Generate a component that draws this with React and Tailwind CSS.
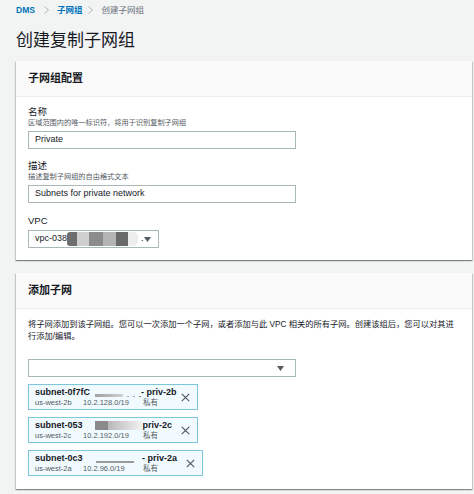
import React from 'react'

const font = { fontFamily: '"Liberation Sans", "Noto Sans CJK SC", sans-serif' }

function Caret() {
  return (
    <svg width="7" height="5" viewBox="0 0 7 5" className="shrink-0">
      <path d="M0 0 L7 0 L3.5 5 Z" fill="#545b64" />
    </svg>
  )
}

function Close() {
  return (
    <svg width="9" height="9" viewBox="0 0 9 9" className="shrink-0">
      <path d="M0.8 0.8 L8.2 8.2 M8.2 0.8 L0.8 8.2" stroke="#545b64" strokeWidth="1.2" />
    </svg>
  )
}

function Card({ title, children, className }) {
  return (
    <div className={`w-[456px] bg-white shadow-[0_1px_1px_0_rgba(0,28,36,0.3),1px_1px_1px_0_rgba(0,28,36,0.15),-1px_1px_1px_0_rgba(0,28,36,0.15)] ${className}`}>
      <div className="h-[36px] flex items-center px-3 bg-[#fafafa] border-b border-[#eaeded]">
        <span className="text-[11px] font-bold text-[#16191f]">{title}</span>
      </div>
      <div className="px-3">{children}</div>
    </div>
  )
}

function Field({ label, desc, value }) {
  return (
    <div>
      <div className="text-[9.5px] leading-[12px] text-[#16191f]">{label}</div>
      <div className="text-[7.2px] leading-[10px] text-[#545b64] whitespace-nowrap">{desc}</div>
      <div className="mt-[3px] h-[18px] w-[268px] border border-[#aab7b8] flex items-center px-[6px] text-[9px] text-[#16191f] whitespace-nowrap">
        {value}
      </div>
    </div>
  )
}

const tokens = [
  { id: 'subnet-0f7fC', az: 'us-west-2b', cidr: '10.2.128.0/19', name: '- priv-2b', w: 'w-[170px]', blur: 'line' },
  { id: 'subnet-053', az: 'us-west-2c', cidr: '10.2.192.0/19', name: 'priv-2c', w: 'w-[170px]', blur: 'block' },
  { id: 'subnet-0c3', az: 'us-west-2a', cidr: '10.2.96.0/19', name: '- priv-2a', w: 'w-[175px]', blur: 'line2' },
]

function Redact({ kind }) {
  if (kind === 'block') {
    return (
      <span className="flex h-[9px] w-[53px] ml-[12px]">
        <span className="w-[13px] bg-[#8a8a8a] blur-[0.5px]" />
        <span className="flex-1 bg-gradient-to-r from-[#b8b8b8] to-[#f2f2f2] blur-[0.5px]" />
      </span>
    )
  }
  if (kind === 'line2') {
    return (
      <span className="flex items-end h-[10px] w-[40px] ml-[13px]">
        <span className="h-[2px] w-[38px] bg-[#9a9a9a] blur-[0.4px]" />
      </span>
    )
  }
  return (
    <span className="flex items-end gap-[4px] h-[10px] ml-[5px]">
      <span className="h-[3px] w-[28px] bg-gradient-to-r from-[#a0a0a0] to-[#d0d0d0] blur-[0.4px]" />
      <span className="h-[1px] w-[2px] bg-[#aaa]" />
      <span className="h-[1px] w-[2px] bg-[#aaa]" />
      <span className="h-[1px] w-[2px] bg-[#888]" />
    </span>
  )
}

export default function App() {
  return (
    <div style={font} className="w-[474px] h-[494px] bg-[#f2f3f3] overflow-hidden pl-4">
      {/* breadcrumb */}
      <div className="h-[20px] flex items-center text-[8.5px]">
        <span className="text-[#0073bb] font-bold">DMS</span>
        <svg width="5" height="8" viewBox="0 0 5 8" className="ml-[9px] mr-[8px]"><path d="M0.5 0.5 L4.5 4 L0.5 7.5" stroke="#aab7b8" fill="none" strokeWidth="1" /></svg>
        <span className="text-[#0073bb] font-bold">子网组</span>
        <svg width="5" height="8" viewBox="0 0 5 8" className="ml-[6px] mr-[8px]"><path d="M0.5 0.5 L4.5 4 L0.5 7.5" stroke="#aab7b8" fill="none" strokeWidth="1" /></svg>
        <span className="text-[#687078]">创建子网组</span>
      </div>
      {/* title */}
      <div className="h-[41px] flex items-center text-[17px] text-[#16191f]">创建复制子网组</div>

      <Card title="子网组配置">
        <div className="pt-[9px] pb-[12px] flex flex-col">
          <Field label="名称" desc="区域范围内的唯一标识符，将用于识别复制子网组" value="Private" />
          <div className="mt-[11px]">
            <Field label="描述" desc="描述复制子网组的自由格式文本" value="Subnets for private network" />
          </div>
          <div className="mt-[12px]">
            <div className="text-[9.5px] leading-[12px] text-[#16191f]">VPC</div>
            <div className="mt-[3px] h-[18px] w-[131px] border border-[#aab7b8] flex items-center pl-[6px] pr-[8px] text-[9px] text-[#16191f] whitespace-nowrap">
              <span className="shrink-0">vpc-038</span>
              <span className="flex h-[14px] shrink-0">
                <span className="w-[10px] bg-[#6e6e6e] rounded-l-[3px] blur-[0.3px]" />
                <span className="w-[12px] bg-[#cfcfcf]" />
                <span className="w-[14px] bg-[#8c8c8c]" />
                <span className="w-[13px] bg-[#b4b4b4]" />
                <span className="w-[12px] bg-[#6a6a6a]" />
                <span className="w-[10px] bg-[#ededed] rounded-r-[5px]" />
              </span>
              <span className="ml-[3px]">.</span>
              <span className="ml-auto"><Caret /></span>
            </div>
          </div>
        </div>
      </Card>

      <Card title="添加子网" className="mt-[13px]">
        <div className="pt-[10px] pb-[13px]">
          <div className="text-[8.25px] leading-[12px] text-[#16191f] -mr-[2px]">
            将子网添加到该子网组。您可以一次添加一个子网，或者添加与此 VPC 相关的所有子网。创建该组后，您可以对其进行添加/编辑。
          </div>
          <div className="mt-[16px] h-[18px] w-[268px] border border-[#aab7b8] flex items-center justify-end pr-[11px]">
            <Caret />
          </div>
          <div className="mt-[7px] flex flex-col gap-[7px]">
            {tokens.map((t) => (
              <div key={t.id} className={`${t.w} h-[26px] border border-[#7dc6dc] bg-[#f1faff] flex items-center pl-[6px] pr-[7px] whitespace-nowrap`}>
                <div className="flex-1 min-w-0">
                  <div className="flex items-center text-[9px] leading-[11px] font-bold text-[#16191f]">
                    <span>{t.id}</span>
                    <Redact kind={t.blur} />
                    <span className="ml-auto">{t.name}</span>
                  </div>
                  <div className="flex text-[7.5px] leading-[10px] text-[#545b64]">
                    <span className="w-[48px]">{t.az}</span>
                    <span className="w-[60px]">{t.cidr}</span>
                    <span>私有</span>
                  </div>
                </div>
                <span className="ml-[9px]"><Close /></span>
              </div>
            ))}
          </div>
        </div>
      </Card>
    </div>
  )
}
